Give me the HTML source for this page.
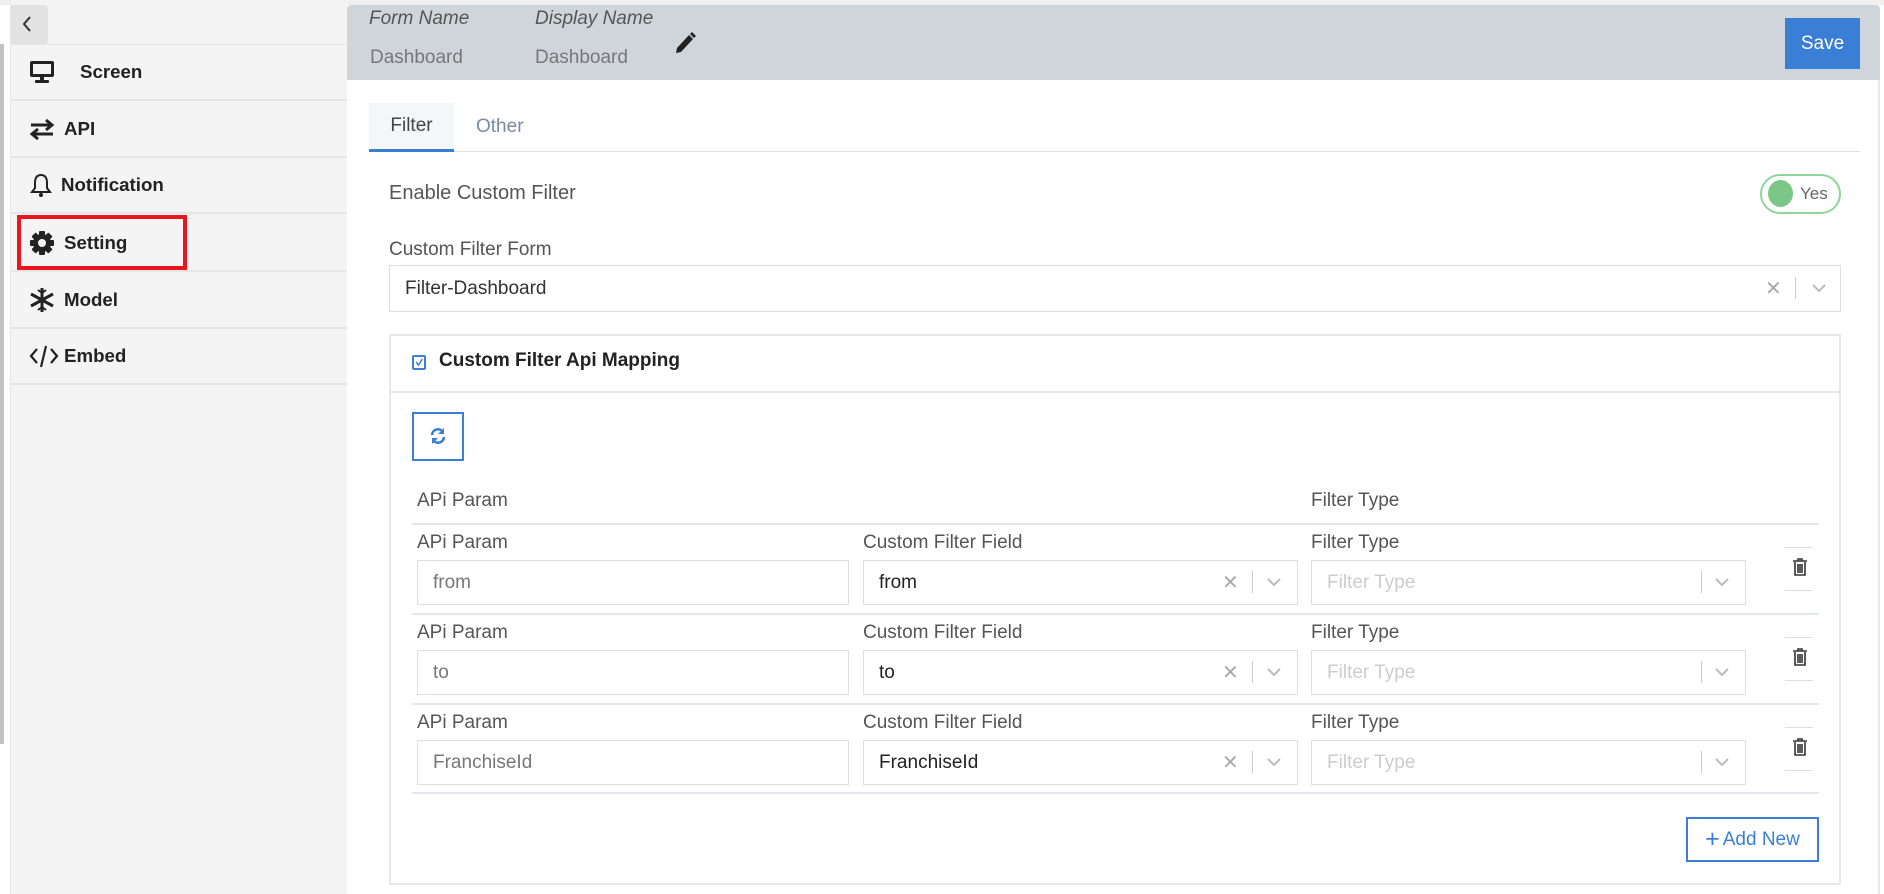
<!DOCTYPE html>
<html><head><meta charset="utf-8">
<style>
*{box-sizing:border-box;margin:0;padding:0}
body{width:1884px;height:894px;background:#fff;font-family:"Liberation Sans",Arial,sans-serif;position:relative;overflow:hidden;color:#333}
.a{position:absolute}
.side{left:10px;top:0;width:337px;height:894px;background:#f4f4f4;border-left:1px solid #e4e4e4}
.item{position:absolute;left:10px;width:337px;height:57px;border-bottom:2px solid #e6e6e6;font-weight:bold;font-size:18.7px;color:#222;display:flex;align-items:center}
.item svg{position:absolute;left:19px}
.lbl{position:absolute;font-size:19px;color:#555}
.inp{position:absolute;height:45px;border:1px solid #dcdfe4;background:#fff;font-size:19px;display:flex;align-items:center;padding-left:15px}
.x{position:absolute;color:#aaa;font-size:20px}
.sep{position:absolute;width:1px;height:22px;background:#ccc}
.chev{position:absolute}
.rline{position:absolute;left:412px;width:1407px;height:2px;background:#e3e6ea}
.tl{position:absolute;left:1785px;width:28px;height:1px;background:#ddd}
</style></head><body>
<div class="a" style="left:0;top:0;width:1884px;height:5px;background:#f0f0f0"></div>
<div class="a" style="left:0;top:44px;width:4px;height:700px;background:#c3c3c3"></div>
<div class="a side"></div>
<div class="a" style="left:10px;top:5px;width:38px;height:39px;background:#e2e2e2;border-radius:3px"></div>
<svg class="a" style="left:21px;top:15px" width="12" height="18" viewBox="0 0 12 18"><path d="M9 2 L3 9 L9 16" fill="none" stroke="#333" stroke-width="2"/></svg>
<div class="a" style="left:10px;top:44px;width:337px;height:1px;background:#e6e6e6"></div>

<div class="item" style="top:44px"><svg width="26" height="26" viewBox="0 0 26 26"><rect x="1" y="2" width="24" height="16" rx="2" fill="#222"/><rect x="4" y="5" width="18" height="10" fill="#f4f4f4"/><rect x="11" y="18" width="4" height="4" fill="#222"/><rect x="6" y="21" width="14" height="3" rx="1" fill="#222"/></svg><span style="margin-left:70px">Screen</span></div>
<div class="item" style="top:101px"><svg width="26" height="26" viewBox="0 0 26 26"><path d="M2 9H22M17 4L23 9L17 14M24 18H4M9 13L3 18L9 23" fill="none" stroke="#222" stroke-width="3"/></svg><span style="margin-left:54px">API</span></div>
<div class="item" style="top:157px"><svg width="24" height="26" viewBox="0 0 24 26"><path d="M12 3C7 3 6 7 6 11V16L3 20H21L18 16V11C18 7 17 3 12 3Z" fill="none" stroke="#222" stroke-width="2"/><circle cx="12" cy="23" r="2" fill="#222"/></svg><span style="margin-left:51px">Notification</span></div>
<div class="item" style="top:215px"><svg width="26" height="26" viewBox="0 0 26 26"><g fill="#222"><circle cx="13" cy="13" r="9"/><rect x="10" y="1" width="6" height="24" rx="1"/><rect x="1" y="10" width="24" height="6" rx="1"/><rect x="10" y="1" width="6" height="24" rx="1" transform="rotate(45 13 13)"/><rect x="10" y="1" width="6" height="24" rx="1" transform="rotate(-45 13 13)"/></g><circle cx="13" cy="13" r="4" fill="#f4f4f4"/></svg><span style="margin-left:54px">Setting</span></div>
<div class="item" style="top:272px"><svg width="26" height="26" viewBox="0 0 26 26"><g stroke="#222" stroke-width="3"><path d="M13 1V25M2 7L24 19M2 19L24 7"/></g><path d="M9 3L13 6L17 3M9 23L13 20L17 23" fill="none" stroke="#222" stroke-width="2"/></svg><span style="margin-left:54px">Model</span></div>
<div class="item" style="top:328px"><svg width="30" height="26" viewBox="0 0 30 26"><path d="M8 6L2 13L8 20M22 6L28 13L22 20M17 3L12 24" fill="none" stroke="#222" stroke-width="2.2"/></svg><span style="margin-left:54px">Embed</span></div>
<div class="a" style="left:17px;top:215px;width:170px;height:55px;border:4px solid #e8141e"></div>

<!-- header -->
<div class="a" style="left:347px;top:5px;width:1533px;height:75px;background:#d0d5dc;border-radius:4px 4px 0 0"></div>
<div class="a" style="left:369px;top:8px;font-size:19px;font-style:italic;color:#555">Form Name</div>
<div class="a" style="left:535px;top:8px;font-size:19px;font-style:italic;color:#555">Display Name</div>
<div class="a" style="left:370px;top:47px;font-size:19px;color:#777">Dashboard</div>
<div class="a" style="left:535px;top:47px;font-size:19px;color:#777">Dashboard</div>
<svg class="a" style="left:674px;top:31px" width="22" height="24" viewBox="0 0 22 24"><path d="M3 17L15 4L19 8L7 21L2 22Z" fill="#222"/><path d="M16 3L18 1L22 5L20 7Z" fill="#222"/></svg>
<div class="a" style="left:1785px;top:18px;width:75px;height:51px;background:#3a7fd5;color:#fff;font-size:19px;display:flex;align-items:center;justify-content:center">Save</div>
<div class="a" style="left:1878px;top:80px;width:2px;height:814px;background:#e8e8e8"></div>

<!-- tabs -->
<div class="a" style="left:369px;top:103px;width:85px;height:49px;background:#f5f6f8;border-bottom:3px solid #3a7fd5;font-size:19px;color:#444;display:flex;align-items:center;justify-content:center">Filter</div>
<div class="a" style="left:476px;top:116px;font-size:19px;color:#7a8aa0">Other</div>
<div class="a" style="left:454px;top:151px;width:1406px;height:1px;background:#dde0e5"></div>

<div class="a" style="left:389px;top:182px;font-size:20px;color:#555">Enable Custom Filter</div>
<div class="a" style="left:1760px;top:174px;width:81px;height:40px;border:2px solid #8fd49a;border-radius:20px"></div>
<div class="a" style="left:1768px;top:180px;width:25px;height:27px;background:#7bc787;border-radius:50%"></div>
<div class="a" style="left:1800px;top:184px;font-size:17px;color:#666">Yes</div>

<div class="lbl" style="left:389px;top:239px">Custom Filter Form</div>
<div class="inp" style="left:389px;top:265px;width:1452px;height:47px;color:#333">Filter-Dashboard</div>
<div class="x" style="left:1765px;top:276px">✕</div><div class="sep" style="left:1795px;top:277px"></div>
<svg class="chev" style="left:1811px;top:282px" width="16" height="12"><path d="M2 3L8 9L14 3" fill="none" stroke="#bbb" stroke-width="2"/></svg>

<!-- card -->
<div class="a" style="left:389px;top:334px;width:1452px;height:551px;border:2px solid #e6e8ec"></div>
<div class="a" style="left:389px;top:391px;width:1452px;height:2px;background:#e6e8ec"></div>
<div class="a" style="left:412px;top:355px;width:14px;height:15px;border:2px solid #3a7fd5;border-radius:2px"></div>
<svg class="a" style="left:414px;top:357px" width="10" height="11"><path d="M2 5L4.5 8L8.5 2" fill="none" stroke="#3a7fd5" stroke-width="1.5"/></svg>
<div class="a" style="left:439px;top:350px;font-size:19px;font-weight:bold;color:#222">Custom Filter Api Mapping</div>
<div class="a" style="left:412px;top:412px;width:52px;height:49px;border:2px solid #3a7fd5"></div>
<svg class="a" style="left:428px;top:426px" width="20" height="20" viewBox="0 0 20 20"><path d="M4 9A6 6 0 0 1 15 6M16 11A6 6 0 0 1 5 14" fill="none" stroke="#3a7fd5" stroke-width="2.6"/><path d="M16 2V8H10Z M4 18V12H10Z" fill="#3a7fd5"/></svg>

<div class="lbl" style="left:417px;top:490px">APi Param</div>
<div class="lbl" style="left:1311px;top:490px">Filter Type</div>
<div class="rline" style="top:523px"></div>

<!-- rows -->
<div class="lbl" style="left:417px;top:532px">APi Param</div><div class="lbl" style="left:863px;top:532px">Custom Filter Field</div><div class="lbl" style="left:1311px;top:532px">Filter Type</div>
<div class="inp" style="left:417px;top:560px;width:432px;color:#777">from</div>
<div class="inp" style="left:863px;top:560px;width:435px;color:#222">from</div>
<div class="x" style="left:1222px;top:570px">✕</div><div class="sep" style="left:1252px;top:571px"></div><svg class="chev" style="left:1266px;top:576px" width="16" height="12"><path d="M2 3L8 9L14 3" fill="none" stroke="#bbb" stroke-width="2"/></svg>
<div class="inp" style="left:1311px;top:560px;width:435px;color:#ccc">Filter Type</div>
<div class="sep" style="left:1701px;top:571px"></div><svg class="chev" style="left:1714px;top:576px" width="16" height="12"><path d="M2 3L8 9L14 3" fill="none" stroke="#bbb" stroke-width="2"/></svg>
<div class="tl" style="top:547px"></div><div class="tl" style="top:590px"></div>
<div class="rline" style="top:613px"></div>

<div class="lbl" style="left:417px;top:622px">APi Param</div><div class="lbl" style="left:863px;top:622px">Custom Filter Field</div><div class="lbl" style="left:1311px;top:622px">Filter Type</div>
<div class="inp" style="left:417px;top:650px;width:432px;color:#777">to</div>
<div class="inp" style="left:863px;top:650px;width:435px;color:#222">to</div>
<div class="x" style="left:1222px;top:660px">✕</div><div class="sep" style="left:1252px;top:661px"></div><svg class="chev" style="left:1266px;top:666px" width="16" height="12"><path d="M2 3L8 9L14 3" fill="none" stroke="#bbb" stroke-width="2"/></svg>
<div class="inp" style="left:1311px;top:650px;width:435px;color:#ccc">Filter Type</div>
<div class="sep" style="left:1701px;top:661px"></div><svg class="chev" style="left:1714px;top:666px" width="16" height="12"><path d="M2 3L8 9L14 3" fill="none" stroke="#bbb" stroke-width="2"/></svg>
<div class="tl" style="top:637px"></div><div class="tl" style="top:680px"></div>
<div class="rline" style="top:703px"></div>

<div class="lbl" style="left:417px;top:712px">APi Param</div><div class="lbl" style="left:863px;top:712px">Custom Filter Field</div><div class="lbl" style="left:1311px;top:712px">Filter Type</div>
<div class="inp" style="left:417px;top:740px;width:432px;color:#777">FranchiseId</div>
<div class="inp" style="left:863px;top:740px;width:435px;color:#222">FranchiseId</div>
<div class="x" style="left:1222px;top:750px">✕</div><div class="sep" style="left:1252px;top:751px"></div><svg class="chev" style="left:1266px;top:756px" width="16" height="12"><path d="M2 3L8 9L14 3" fill="none" stroke="#bbb" stroke-width="2"/></svg>
<div class="inp" style="left:1311px;top:740px;width:435px;color:#ccc">Filter Type</div>
<div class="sep" style="left:1701px;top:751px"></div><svg class="chev" style="left:1714px;top:756px" width="16" height="12"><path d="M2 3L8 9L14 3" fill="none" stroke="#bbb" stroke-width="2"/></svg>
<div class="tl" style="top:727px"></div><div class="tl" style="top:770px"></div>
<div class="rline" style="top:792px"></div>

<!-- trash icons -->
<svg class="a" style="left:1792px;top:557px" width="16" height="20" viewBox="0 0 16 20"><path d="M1 4H15M6 4V2H10V4M3 5V18H13V5M6 7V16M8 7V16M10 7V16" fill="none" stroke="#333" stroke-width="1.6"/></svg>
<svg class="a" style="left:1792px;top:647px" width="16" height="20" viewBox="0 0 16 20"><path d="M1 4H15M6 4V2H10V4M3 5V18H13V5M6 7V16M8 7V16M10 7V16" fill="none" stroke="#333" stroke-width="1.6"/></svg>
<svg class="a" style="left:1792px;top:737px" width="16" height="20" viewBox="0 0 16 20"><path d="M1 4H15M6 4V2H10V4M3 5V18H13V5M6 7V16M8 7V16M10 7V16" fill="none" stroke="#333" stroke-width="1.6"/></svg>

<div class="a" style="left:1686px;top:817px;width:133px;height:45px;border:2px solid #3a7fd5;color:#3a7fd5;font-size:19px;display:flex;align-items:center;justify-content:center"><span style="font-size:25px;margin-right:3px;line-height:1">+</span>Add New</div>
</body></html>
